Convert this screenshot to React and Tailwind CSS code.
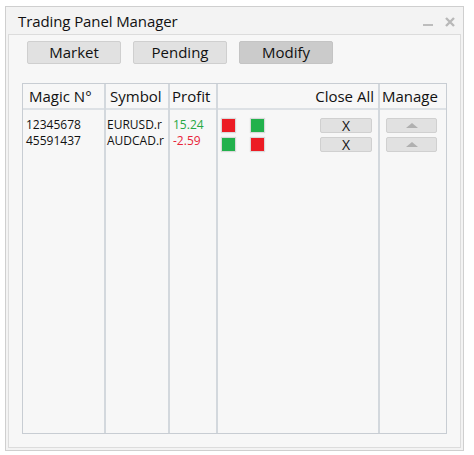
import { useState } from "react";

const rows = [
  { magic: "12345678", symbol: "EURUSD.r", profit: "15.24", up: true, a: "red", b: "green" },
  { magic: "45591437", symbol: "AUDCAD.r", profit: "-2.59", up: false, a: "green", b: "red" },
];

function Square({ color }) {
  return (
    <div
      className={`h-[13px] w-[13px] shadow-[0_0_1px_1px_rgba(0,0,0,0.12)] ${
        color === "red" ? "bg-[#ec1c24]" : "bg-[#22b14c]"
      }`}
    />
  );
}

export default function App() {
  const [tab, setTab] = useState("Modify");

  return (
    <div className="h-[455px] w-[474px] bg-white pl-[5px] pt-[6px] font-['Open_Sans',sans-serif] text-[#111]">
      <div className="flex h-[445px] w-[459px] flex-col border border-[#cfcfcf] bg-[#f3f3f3] p-[2px]">
        <div className="flex h-[25px] items-center justify-between pl-[10px] pr-[6px]">
          <span className="text-[15px] tracking-[-0.1px]">Trading Panel Manager</span>
          <div className="flex items-center gap-[12px] text-[#b4b4b4]">
            <div className="mt-[6px] h-[2px] w-[10px] bg-[#bdbdbd]" />
            <svg width="10" height="10" viewBox="0 0 10 10">
              <path d="M1 1L9 9M9 1L1 9" stroke="#b8b8b8" strokeWidth="2.4" />
            </svg>
          </div>
        </div>
        <div className="flex flex-1 flex-col border border-[#dcdcdc] bg-[#f7f7f7] pb-[13px] pl-[13px] pr-[13px]">
          <div className="flex gap-[12px] pl-[5px] pt-[6px]">
            {["Market", "Pending", "Modify"].map((t) => (
              <button
                key={t}
                onClick={() => setTab(t)}
                className={`h-[23px] w-[94px] rounded-[2px] border text-[15px] leading-none ${
                  tab === t ? "border-[#c4c4c4] bg-[#cbcbcb]" : "border-[#cfcfcf] bg-[#e1e1e1]"
                }`}
              >
                {t}
              </button>
            ))}
          </div>
          <div className="mt-[19px] flex flex-1 border border-[#c8cdd3] bg-[#f7f7f7]">
            <div className="flex w-[83px] flex-col border-r-2 border-[#d3d8dd]">
              <div className="flex h-[26px] items-end border-b-2 border-[#dde1e5] pb-[1px] pl-[6px] text-[15px]">
                Magic N°
              </div>
              <div className="pl-[3px] pt-[7px] text-[12px] leading-[16px]">
                {rows.map((r) => (
                  <div key={r.magic}>{r.magic}</div>
                ))}
              </div>
            </div>
            <div className="flex w-[64px] flex-col border-r-2 border-[#d3d8dd]">
              <div className="flex h-[26px] items-end border-b-2 border-[#dde1e5] pb-[1px] pl-[4px] text-[15px]">
                Symbol
              </div>
              <div className="pl-[1px] pt-[7px] text-[12px] leading-[16px]">
                {rows.map((r) => (
                  <div key={r.symbol}>{r.symbol}</div>
                ))}
              </div>
            </div>
            <div className="flex w-[48px] flex-col border-r-2 border-[#d3d8dd]">
              <div className="flex h-[26px] items-end border-b-2 border-[#dde1e5] pb-[1px] pl-[2px] text-[15px]">
                Profit
              </div>
              <div className="pl-[3px] pt-[7px] text-[12px] leading-[16px]">
                {rows.map((r) => (
                  <div key={r.profit} className={r.up ? "text-[#27a844]" : "text-[#e8243a]"}>
                    {r.profit}
                  </div>
                ))}
              </div>
            </div>
            <div className="flex w-[162px] flex-col border-r-2 border-[#d3d8dd]">
              <div className="flex h-[26px] items-end justify-end border-b-2 border-[#dde1e5] pb-[1px] pr-[4px] text-[15px]">
                Close All
              </div>
              <div className="flex flex-col gap-[4px] pt-[8px]">
                {rows.map((r) => (
                  <div key={r.magic} className="flex h-[15px] items-center">
                    <div className="ml-[4px] flex gap-[16px]">
                      <Square color={r.a} />
                      <Square color={r.b} />
                    </div>
                    <button className="ml-[56px] flex h-[15px] w-[52px] items-center justify-center rounded-[2px] border border-[#d0d0d0] bg-[#e1e1e1] text-[14px] leading-none">
                      X
                    </button>
                  </div>
                ))}
              </div>
            </div>
            <div className="flex flex-1 flex-col">
              <div className="flex h-[26px] items-end border-b-2 border-[#dde1e5] pb-[1px] pl-[2px] text-[15px]">
                Manage
              </div>
              <div className="flex flex-col gap-[4px] pl-[6px] pt-[8px]">
                {rows.map((r) => (
                  <button
                    key={r.magic}
                    className="flex h-[15px] w-[51px] items-center justify-center rounded-[2px] border border-[#d0d0d0] bg-[#e1e1e1]"
                  >
                    <svg width="12" height="5" viewBox="0 0 12 5">
                      <path d="M0 5L6 0L12 5Z" fill="#b0b0b0" />
                    </svg>
                  </button>
                ))}
              </div>
            </div>
          </div>
        </div>
      </div>
    </div>
  );
}
